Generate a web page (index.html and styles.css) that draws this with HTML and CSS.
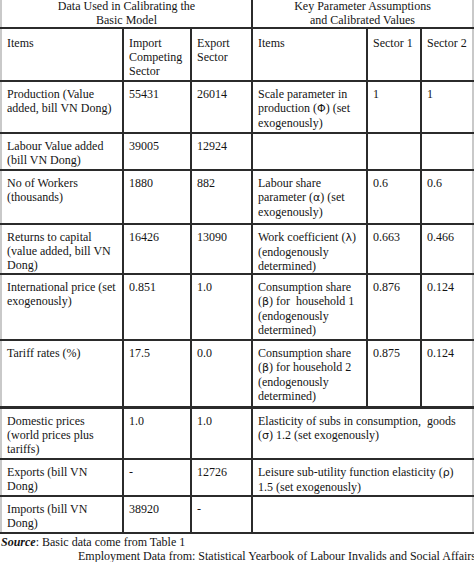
FILE: index.html
```html
<!DOCTYPE html>
<html>
<head>
<meta charset="utf-8">
<link rel="stylesheet" href="styles.css">
</head>
<body>
<div class="page">
<table class="calib">
  <colgroup>
    <col class="c1"><col class="c2"><col class="c3"><col class="c4"><col class="c5"><col class="c6">
  </colgroup>
  <tr class="r-head">
    <th colspan="3">Data Used in Calibrating the<br>Basic Model</th>
    <th colspan="3">Key Parameter Assumptions<br>and Calibrated Values</th>
  </tr>
  <tr class="r-items">
    <td>Items</td>
    <td>Import<br>Competing<br>Sector</td>
    <td>Export<br>Sector</td>
    <td>Items</td>
    <td>Sector 1</td>
    <td>Sector 2</td>
  </tr>
  <tr class="r3">
    <td>Production (Value<br>added, bill VN Dong)</td>
    <td>55431</td>
    <td>26014</td>
    <td>Scale parameter in<br>production (<span class="gk">Φ</span>) (set<br>exogenously)</td>
    <td>1</td>
    <td>1</td>
  </tr>
  <tr class="r4">
    <td>Labour Value added<br>(bill VN Dong)</td>
    <td>39005</td>
    <td>12924</td>
    <td></td>
    <td></td>
    <td></td>
  </tr>
  <tr class="r5">
    <td>No of Workers<br>(thousands)</td>
    <td>1880</td>
    <td>882</td>
    <td>Labour share<br>parameter (<span class="gk">α</span>) (set<br>exogenously)</td>
    <td>0.6</td>
    <td>0.6</td>
  </tr>
  <tr class="r6">
    <td>Returns to capital<br>(value added, bill VN<br>Dong)</td>
    <td>16426</td>
    <td>13090</td>
    <td>Work coefficient (<span class="gk">λ</span>)<br>(endogenously<br>determined)</td>
    <td>0.663</td>
    <td>0.466</td>
  </tr>
  <tr class="r7">
    <td>International price (set<br>exogenously)</td>
    <td>0.851</td>
    <td>1.0</td>
    <td>Consumption share<br>(<span class="gk">β</span>) for&nbsp; household 1<br>(endogenously<br>determined)</td>
    <td>0.876</td>
    <td>0.124</td>
  </tr>
  <tr class="r8">
    <td>Tariff rates (%)</td>
    <td>17.5</td>
    <td>0.0</td>
    <td>Consumption share<br>(<span class="gk">β</span>) for household 2<br>(endogenously<br>determined)</td>
    <td>0.875</td>
    <td>0.124</td>
  </tr>
  <tr class="r9">
    <td>Domestic prices<br>(world prices plus<br>tariffs)</td>
    <td>1.0</td>
    <td>1.0</td>
    <td colspan="3">Elasticity of subs in consumption,&nbsp; goods<br>(<span class="gk">σ</span>) 1.2 (set exogenously)</td>
  </tr>
  <tr class="r10">
    <td>Exports (bill VN<br>Dong)</td>
    <td>-</td>
    <td>12726</td>
    <td colspan="3">Leisure sub-utility function elasticity (<span class="gk">ρ</span>)<br>1.5 (set exogenously)</td>
  </tr>
  <tr class="r11">
    <td>Imports (bill VN<br>Dong)</td>
    <td>38920</td>
    <td>-</td>
    <td colspan="3"></td>
  </tr>
</table>
<div class="notes">
  <p class="source"><b><i>Source</i></b>: Basic data come from Table 1</p>
  <p class="employ">Employment Data from: Statistical Yearbook of Labour Invalids and Social Affairs</p>
</div>
</div>
</body>
</html>
```

FILE: styles.css
```css
html, body {
  margin: 0;
  padding: 0;
  background: #ffffff;
}
body {
  width: 474px;
  height: 562px;
  overflow: hidden;
  font-family: "Liberation Serif", "Times New Roman", serif;
  font-size: 12px;
  line-height: 14px;
  color: #141414;
}
.page {
  width: 474px;
}
.calib {
  border-collapse: collapse;
  table-layout: fixed;
  width: 474px;
}
.c1 { width: 122px; }
.c2 { width: 68px; }
.c3 { width: 61px; }
.c4 { width: 115px; }
.c5 { width: 54px; }
.c6 { width: 52px; }

.calib th,
.calib td {
  border: 2px solid #2b2b2b;
  vertical-align: top;
  text-align: left;
  padding: 5px 4px 0 5px;
  font-weight: normal;
  overflow: hidden;
}
.calib tr > :first-child {
  border-left: 2px solid #c9c9c9;
}
.calib tr > :last-child {
  border-right: 2px solid #c9c9c9;
}
.calib th {
  border-top: none;
  text-align: center;
  padding: 0 2px;
  line-height: 13.5px;
}
.r-head { height: 28px; }
.r-items { height: 53px; }
.r-items td { padding-top: 7px; }
.r3 { height: 52px; }
.r4 { height: 37px; }
.r5 { height: 54px; }
.r6 { height: 50px; }
.r7 { height: 66px; }
.r8 { height: 67px; }
.r8 td { border-bottom-width: 3px; }
.r9 { height: 52px; }
.r10 { height: 37px; }
.r11 { height: 37px; }

.gk {
  font-family: "DejaVu Sans", sans-serif;
  font-size: 11px;
}
.notes p {
  margin: 0;
  white-space: nowrap;
  line-height: 14px;
}
.source {
  padding-top: 1px;
  padding-left: 1px;
}
.employ {
  padding-left: 78px;
  line-height: 13px;
}
```
